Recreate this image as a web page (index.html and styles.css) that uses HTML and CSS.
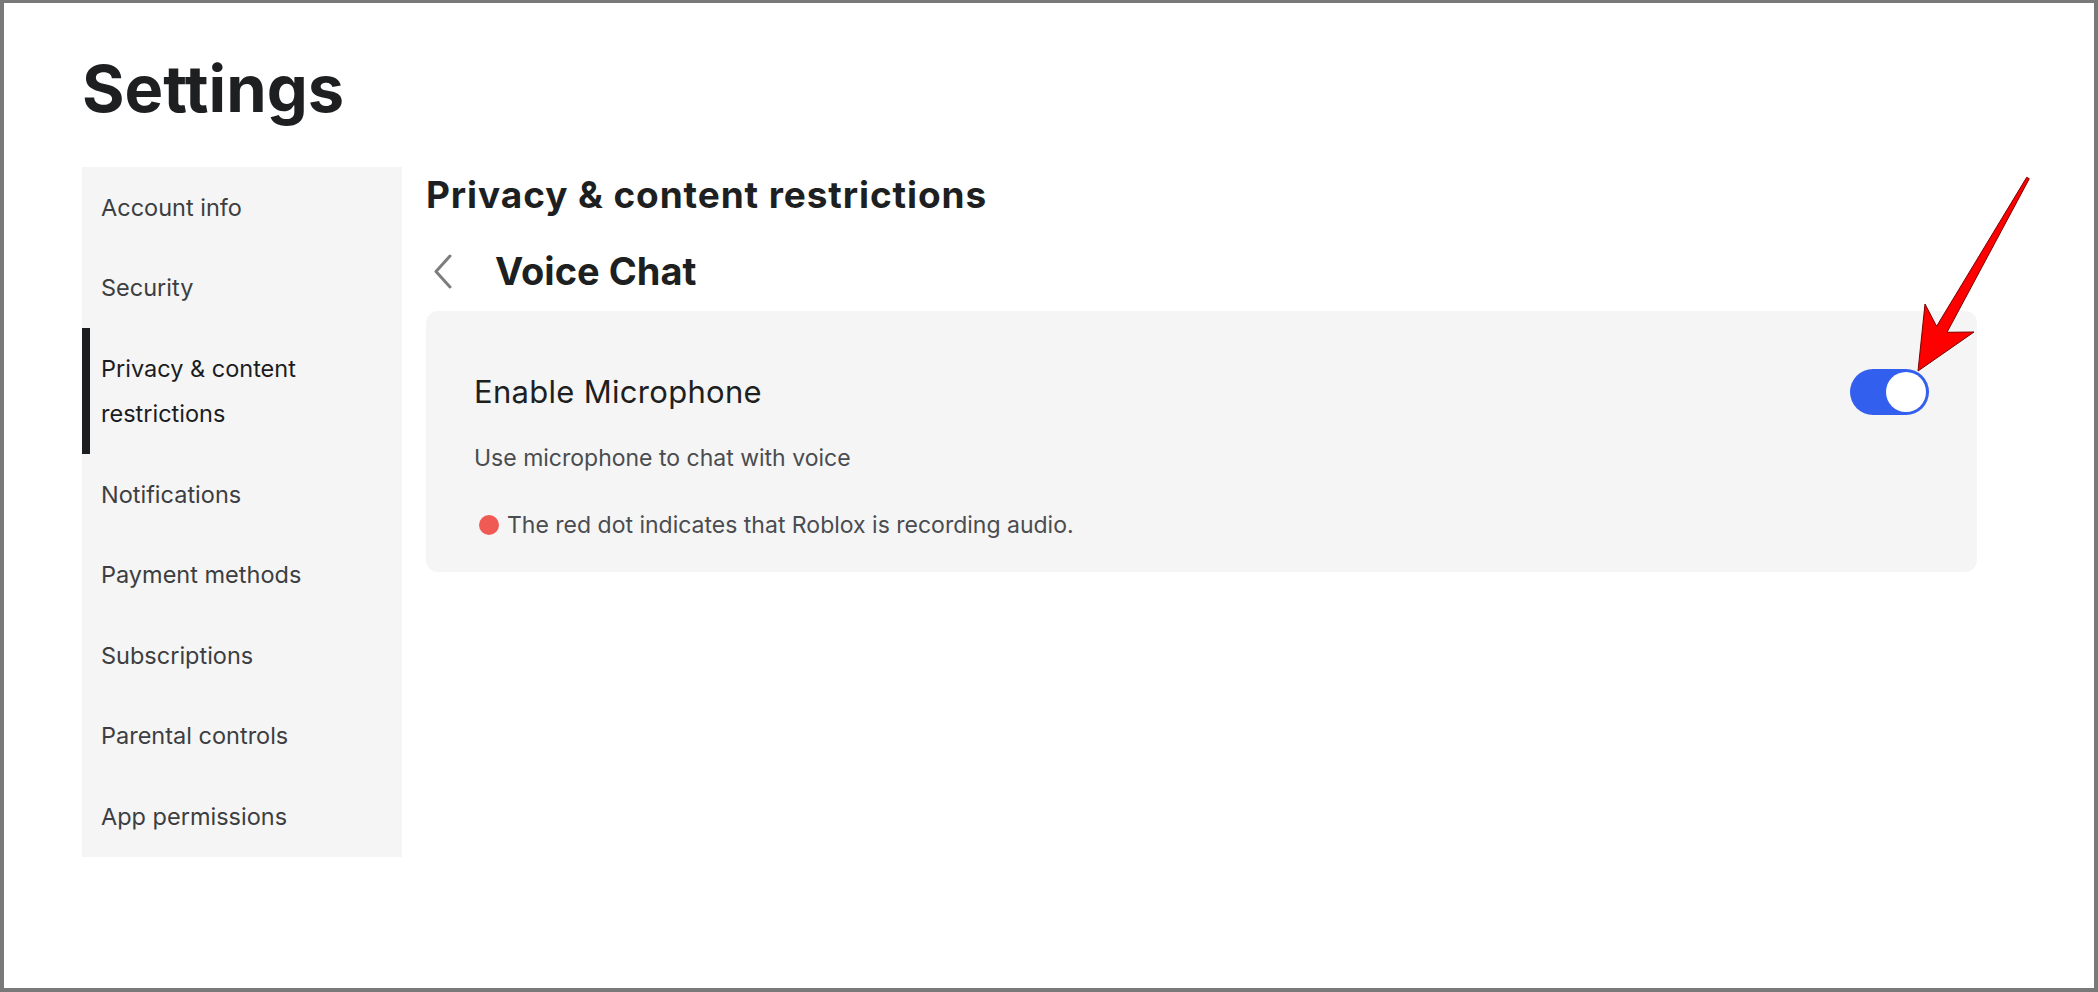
FILE: index.html
```html
<!DOCTYPE html>
<html lang="en">
<head>
<meta charset="utf-8">
<title>Settings</title>
<link rel="stylesheet" href="styles.css">
</head>
<body>
<div class="frame">
  <h1 class="page-title">Settings</h1>
  <div class="layout">
    <nav class="sidebar">
      <div class="nav-item">Account info</div>
      <div class="nav-item">Security</div>
      <div class="nav-item active">Privacy &amp; content<br>restrictions</div>
      <div class="nav-item">Notifications</div>
      <div class="nav-item">Payment methods</div>
      <div class="nav-item">Subscriptions</div>
      <div class="nav-item">Parental controls</div>
      <div class="nav-item">App permissions</div>
    </nav>
    <main class="main">
      <h2 class="section-title">Privacy &amp; content restrictions</h2>
      <div class="sub-header">
        <svg class="back" width="19" height="35" viewBox="0 0 19 35"><polyline points="17,2 3,17.5 17,33" fill="none" stroke="#7d7d7d" stroke-width="3" stroke-linecap="round" stroke-linejoin="round"/></svg>
        <span class="sub-title">Voice Chat</span>
      </div>
      <section class="card">
        <div class="card-row">
          <span class="card-title">Enable Microphone</span>
          <span class="toggle"><span class="knob"></span></span>
        </div>
        <p class="card-desc">Use microphone to chat with voice</p>
        <p class="card-note"><span class="red-dot"></span>The red dot indicates that Roblox is recording audio.</p>
      </section>
    </main>
  </div>
  <svg class="arrow" width="2098" height="992" viewBox="0 0 2098 992">
    <polygon points="1918,371 1925,304 1936.6,326.3 2026.7,177.3 2029.3,178.7 1947,332.3 1974,332" fill="#ff0000" stroke="#7a0000" stroke-width="1" stroke-linejoin="round"/>
  </svg>
</div>
</body>
</html>
```

FILE: styles.css
```css
* { box-sizing: border-box; }
html, body { margin: 0; padding: 0; }
body {
  font-family: Inter, "Noto Sans", sans-serif;
  background: #ffffff;
  color: #1e1f21;
}
.frame {
  position: relative;
  width: 2098px;
  height: 992px;
  border-style: solid;
  border-color: #797979;
  border-width: 3px 4px 4px 4px;
  padding: 53px 0 0 78px;
  overflow: hidden;
}
.page-title {
  margin: 0 0 45px 0;
  font-size: 65px;
  line-height: 66px;
  font-weight: 700;
  color: #1e1f21;
}
.layout {
  display: grid;
  grid-template-columns: 320px 1551px;
  column-gap: 24px;
  align-items: start;
}
.sidebar {
  background: #f5f5f5;
  display: flex;
  flex-direction: column;
}
.nav-item {
  padding: 17.8px 10px 17.8px 19px;
  font-size: 23.5px;
  line-height: 45px;
  color: #3c3e41;
}
.nav-item.active {
  color: #1b1c1e;
  box-shadow: inset 8px 0 0 #1d1e20;
}
.main {
  display: flex;
  flex-direction: column;
}
.section-title {
  margin: 6px 0 0 0;
  font-size: 37px;
  line-height: 44px;
  font-weight: 700;
  letter-spacing: 0.9px;
  color: #1e1f21;
}
.sub-header {
  display: flex;
  align-items: center;
  margin-top: 30px;
  padding-left: 7px;
  gap: 43px;
  height: 48px;
}
.back { display: block; flex: none; }
.sub-title {
  font-size: 38px;
  line-height: 48px;
  font-weight: 700;
  color: #1e1f21;
}
.card {
  margin-top: 16px;
  background: #f5f5f5;
  border-radius: 12px;
  padding: 57px 48px 31px 48px;
}
.card-row {
  display: flex;
  align-items: center;
  justify-content: space-between;
  height: 48px;
}
.card-title {
  font-size: 31px;
  line-height: 40px;
  letter-spacing: 0.3px;
  color: #1e1f21;
}
.toggle {
  position: relative;
  display: block;
  width: 79px;
  height: 46px;
  border-radius: 23px;
  background: #335fee;
}
.knob {
  position: absolute;
  right: 3px;
  top: 3px;
  width: 40px;
  height: 40px;
  border-radius: 50%;
  background: #ffffff;
}
.card-desc {
  margin: 26px 0 0 0;
  font-size: 23px;
  line-height: 32px;
  color: #4a4c50;
}
.card-note {
  margin: 35px 0 0 0;
  font-size: 23px;
  line-height: 32px;
  color: #4a4c50;
}
.red-dot {
  display: inline-block;
  width: 20px;
  height: 20px;
  border-radius: 50%;
  background: #ef5a55;
  vertical-align: middle;
  margin: -4px 8px 0 5px;
}
.arrow {
  position: absolute;
  left: -4px;
  top: -3px;
  pointer-events: none;
}
```
